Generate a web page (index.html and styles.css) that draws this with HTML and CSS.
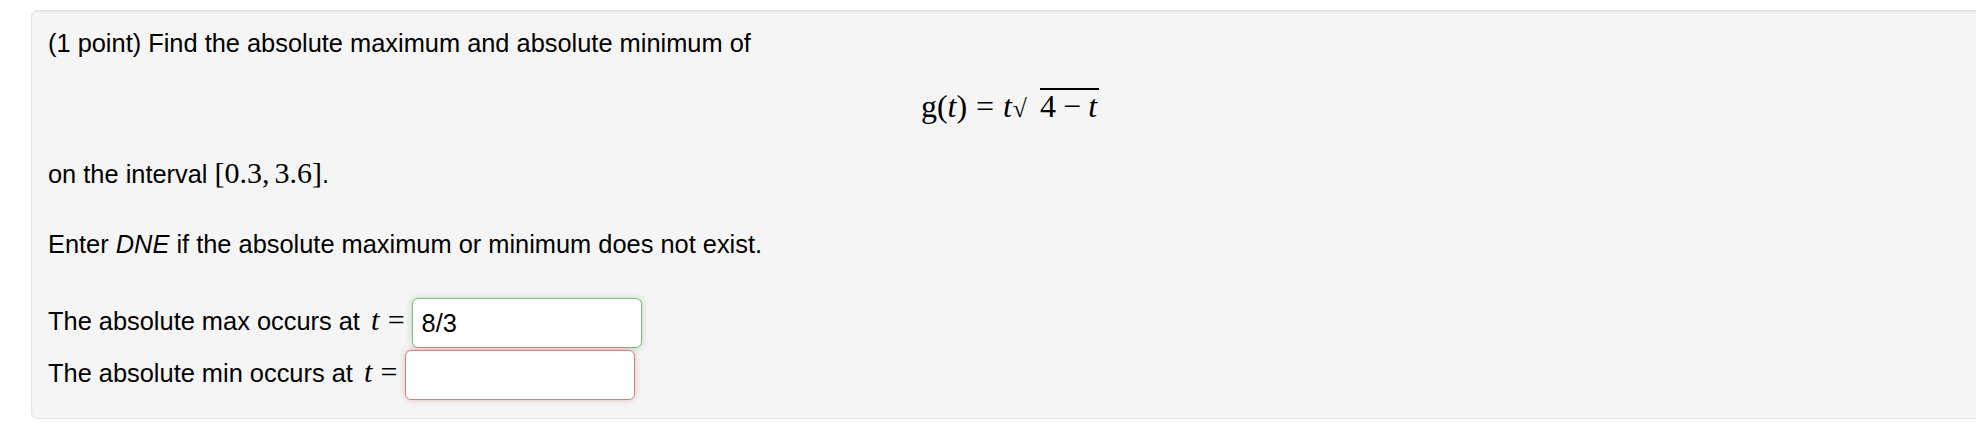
FILE: index.html
```html
<!DOCTYPE html>
<html>
<head>
<meta charset="utf-8">
<link rel="stylesheet" href="styles.css">
</head>
<body>
<div class="page">
  <div class="problem">
    <div class="line first">(1 point) Find the absolute maximum and absolute minimum of</div>
    <div class="display"><span class="math"><span class="up">g</span>(<span class="mi">t</span>)<span class="rel">=</span><span class="mi">t</span><span class="rad">√</span><span class="ov">4<span class="bin">−</span><span class="mi">t</span></span></span></div>
    <div class="line interval">on the interval <span class="imath">[0.3,<span class="thin"></span>3.6]</span>.</div>
    <div class="line dne">Enter <i>DNE</i> if the absolute maximum or minimum does not exist.</div>
    <div class="answer first-answer">The absolute max occurs at <span class="imath"><span class="mi at">t</span><span class="rel-end">=</span></span> <input class="ans correct" type="text" value="8/3"></div>
    <div class="answer">The absolute min occurs at <span class="imath"><span class="mi at">t</span><span class="rel-end">=</span></span> <input class="ans incorrect" type="text" value=""></div>
  </div>
</div>
</body>
</html>
```

FILE: styles.css
```css
html, body {
  margin: 0;
  padding: 0;
  background: #ffffff;
  overflow: hidden;
}

.page {
  display: flex;
  padding: 10px 0 0 31px;
  width: 2100px;
}

.problem {
  flex: none;
  width: 1924px;
  padding: 16px 16px 17px;
  background: #f5f5f5;
  border: 1px solid #e3e3e3;
  border-radius: 6px;
  box-shadow: inset 0 1px 2px rgba(0, 0, 0, 0.05);
  font-family: "Liberation Sans", Arial, Helvetica, sans-serif;
  font-size: 25.4px;
  line-height: 32px;
  color: #000;
}

.line {
  white-space: nowrap;
}

.display {
  margin-top: 27px;
  height: 40px;
  line-height: 40px;
  text-align: center;
  font-family: "Liberation Serif", "Times New Roman", serif;
  font-size: 32px;
}

.math {
  font-family: "Liberation Serif", "Times New Roman", serif;
  font-size: 32px;
  white-space: nowrap;
}

.imath {
  font-family: "Liberation Serif", "Times New Roman", serif;
  font-size: 30px;
  white-space: nowrap;
}

.mi {
  font-style: italic;
}

.up {
  font-style: normal;
}

.rel {
  margin: 0 0.2778em;
}

.rel-end {
  margin-left: 0.2778em;
}

.at {
  margin-left: 4px;
}

.bin {
  margin: 0 0.2222em;
}

.rad {
  font-size: 0.8em;
  margin-left: 1px;
}

.ov {
  display: inline-block;
  line-height: 32px;
  border-top: 2px solid #000;
  margin-left: 13px;
  padding-right: 2px;
}

.thin {
  display: inline-block;
  width: 5px;
}

.interval {
  margin-top: 31px;
}

.dne {
  margin-top: 38px;
}

.answer {
  white-space: nowrap;
}

.first-answer {
  margin-top: 37px;
}

.ans {
  box-sizing: border-box;
  width: 230px;
  height: 50px;
  margin: 1px 0;
  padding: 0 9px;
  vertical-align: middle;
  border: 1px solid #ccc;
  border-radius: 6px;
  background: #fff;
  font-family: "Liberation Sans", Arial, Helvetica, sans-serif;
  font-size: 25.4px;
  color: #000;
  outline: none;
}

.correct {
  border-color: #7fb97f;
  box-shadow: 0 0 6px rgba(81, 153, 81, 0.35);
}

.incorrect {
  border-color: #d08585;
  box-shadow: 0 0 6px rgba(191, 84, 80, 0.35);
}
```
